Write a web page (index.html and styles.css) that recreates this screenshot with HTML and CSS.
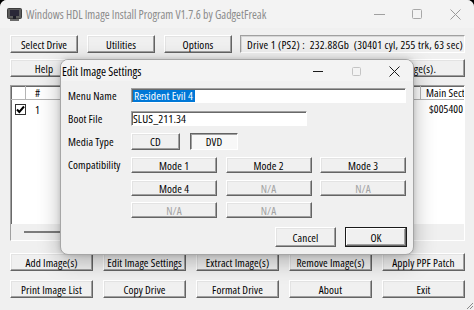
FILE: index.html
```html
<!DOCTYPE html>
<html>
<head>
<meta charset="utf-8">
<title>Windows HDL Image Install Program</title>
<link rel="stylesheet" href="styles.css">
</head>
<body>
<div class="window">
  <div class="titlebar">
    <svg class="app-icon" width="15" height="13" viewBox="0 0 15 13">
      <rect x="0.5" y="0.5" width="14" height="10" rx="1" fill="#5c5c5c" stroke="#3c3c3c"/>
      <rect x="3" y="2" width="9" height="6" fill="#2a2838"/>
      <rect x="6" y="8" width="3" height="3" fill="#1e1e28"/>
      <rect x="3" y="11" width="9" height="2" fill="#6a6a6a"/>
    </svg>
    <span class="title">Windows HDL Image Install Program V1.7.6 by GadgetFreak</span>
    <div class="caps">
      <span class="cap"><svg width="11" height="11" viewBox="0 0 11 11"><path d="M0 5.5H11" stroke="#a0a0a0" stroke-width="1"/></svg></span>
      <span class="cap"><svg width="10" height="10" viewBox="0 0 10 10"><rect x="0.5" y="0.5" width="9" height="9" rx="1" fill="none" stroke="#a8a8a8"/></svg></span>
      <span class="cap"><svg width="11" height="11" viewBox="0 0 11 11"><path d="M0.5 0.5L10.5 10.5M10.5 0.5L0.5 10.5" stroke="#9a9a9a" stroke-width="1"/></svg></span>
    </div>
  </div>

  <div class="main">
    <div class="row row1">
      <button class="btn b68">Select Drive</button>
      <button class="btn b68">Utilities</button>
      <button class="btn b68">Options</button>
      <div class="drivebox">Drive 1 (PS2) :&nbsp; 232.88Gb &nbsp;(30401 cyl, 255 trk, 63 sec)</div>
    </div>
    <div class="row row2">
      <button class="btn b68">Help</button>
      <button class="btn wide">Show Installed Image(s).</button>
    </div>

    <div class="list">
      <div class="lv-head">
        <div class="col c-check"></div>
        <div class="col c-num">#</div>
        <div class="col c-name"></div>
        <div class="col c-main">Main Sector</div>
      </div>
      <div class="lv-row">
        <div class="cell c-check">
          <svg width="11" height="11" viewBox="0 0 11 11"><rect x="0.5" y="0.5" width="10" height="10" fill="#fff" stroke="#333"/><path d="M2 5.5L4.3 8L9 2.5" fill="none" stroke="#000" stroke-width="2"/></svg>
        </div>
        <div class="cell c-num">1</div>
        <div class="cell c-name"></div>
        <div class="cell c-main num">$005400</div>
      </div>
      <div class="lv-fill"></div>
      <div class="hscroll"><div class="thumb"></div></div>
    </div>

    <div class="row row3">
      <button class="btn b83">Add Image(s)</button>
      <button class="btn b83">Edit Image Settings</button>
      <button class="btn b83">Extract Image(s)</button>
      <button class="btn b83">Remove Image(s)</button>
      <button class="btn b83">Apply PPF Patch</button>
    </div>
    <div class="row row4">
      <button class="btn b83">Print Image List</button>
      <button class="btn b83">Copy Drive</button>
      <button class="btn b83">Format Drive</button>
      <button class="btn b83">About</button>
      <button class="btn b83">Exit</button>
    </div>
  </div>

  <svg class="grip" width="10" height="10" viewBox="0 0 10 10">
    <path d="M9 3L3 9M9 6L6 9" stroke="#8a8a8a" stroke-width="1"/>
  </svg>

  <div class="dialog">
    <div class="dlg-title">
      <span class="dlg-text">Edit Image Settings</span>
      <div class="caps">
        <span class="cap"><svg width="10" height="10" viewBox="0 0 10 10"><path d="M0 5.5H10" stroke="#1a1a1a" stroke-width="1"/></svg></span>
        <span class="cap"><svg width="9" height="9" viewBox="0 0 9 9"><rect x="0.5" y="0.5" width="8" height="8" rx="1" fill="none" stroke="#c4c4c4"/></svg></span>
        <span class="cap"><svg width="11" height="11" viewBox="0 0 11 11"><path d="M0.5 0.5L10.5 10.5M10.5 0.5L0.5 10.5" stroke="#1a1a1a" stroke-width="1"/></svg></span>
      </div>
    </div>
    <div class="dlg-body">
      <div class="field f1">
        <span class="label">Menu Name</span>
        <div class="input in-name"><span class="sel">Resident Evil 4</span></div>
      </div>
      <div class="field f2">
        <span class="label">Boot File</span>
        <div class="input in-boot">SLUS_211.34</div>
      </div>
      <div class="field f3">
        <span class="label">Media Type</span>
        <button class="btn media">CD</button>
        <button class="btn media pressed">DVD</button>
      </div>
      <div class="field f4">
        <span class="label top">Compatibility</span>
        <div class="modes">
          <button class="btn">Mode 1</button>
          <button class="btn">Mode 2</button>
          <button class="btn">Mode 3</button>
          <button class="btn">Mode 4</button>
          <button class="btn disabled">N/A</button>
          <button class="btn disabled">N/A</button>
          <button class="btn disabled">N/A</button>
          <button class="btn disabled">N/A</button>
        </div>
      </div>
      <div class="actions">
        <button class="btn act">Cancel</button>
        <button class="btn act default">OK</button>
      </div>
    </div>
  </div>
</div>
</body>
</html>
```

FILE: styles.css
```css
* {
  box-sizing: border-box;
}

html, body {
  margin: 0;
  padding: 0;
  background: #000;
}

body {
  width: 474px;
  height: 310px;
  overflow: hidden;
  font-family: "Open Sans", "Liberation Sans", sans-serif;
  font-stretch: 75%;
  font-size: 11.2px;
  font-weight: 380;
  letter-spacing: 0.1px;
  color: #000;
}

.window {
  position: relative;
  width: 474px;
  height: 310px;
  background: #f0f0f0;
  border-radius: 7px 7px 0 0;
  overflow: hidden;
}

/* ---------- title bar ---------- */
.titlebar {
  height: 28px;
  display: flex;
  align-items: center;
  padding-left: 7px;
  background: #f3f3f3;
}

.app-icon {
  margin-right: 4px;
  margin-top: 1px;
}

.title {
  flex: 1;
  font-size: 11.8px;
  letter-spacing: 0;
  color: #8c8c8c;
  white-space: nowrap;
}

.caps {
  display: flex;
  align-self: stretch;
}

.cap {
  width: 38px;
  display: flex;
  align-items: center;
  justify-content: center;
}

/* ---------- main area ---------- */
.main {
  display: flex;
  flex-direction: column;
  padding: 7px 9px 0 10px;
}

.row {
  display: flex;
  height: 18px;
}

.row1 { gap: 9px; }
.row2 { margin-top: 6px; justify-content: space-between; }
.row3 { margin-top: 12px; gap: 10px; }
.row4 { margin-top: 9px; gap: 10px; }

.btn {
  font: inherit;
  letter-spacing: inherit;
  color: #000;
  padding: 0;
  margin: 0;
  background: #f0f0f0;
  border: 1px solid;
  border-color: #ffffff #646464 #646464 #ffffff;
  box-shadow: inset -1px -1px 0 #a0a0a0, inset 1px 1px 0 #e3e3e3;
  white-space: nowrap;
  overflow: hidden;
  text-align: center;
}

.b68 { width: 68px; }
.b83 { width: 83px; }

.wide {
  width: 225px;
  text-align: right;
  padding-right: 28px;
}

.drivebox {
  margin-left: -1px;
  width: 225px;
  display: flex;
  align-items: center;
  padding-left: 6px;
  letter-spacing: 0.25px;
  border: 1px solid;
  border-color: #a0a0a0 #ffffff #ffffff #a0a0a0;
  box-shadow: inset 1px 1px 0 #d6d6d6;
  white-space: nowrap;
}

/* ---------- list view ---------- */
.list {
  margin-top: 8px;
  height: 156px;
  background: #fff;
  border: 1px solid;
  border-color: #a0a0a0 #ffffff #ffffff #a0a0a0;
  box-shadow: inset 1px 1px 0 #696969;
  display: flex;
  flex-direction: column;
  overflow: hidden;
}

.lv-head {
  height: 14px;
  display: flex;
  border-bottom: 1px solid #b4b4b4;
  flex: none;
}

.lv-head .col {
  border-right: 1px solid #b4b4b4;
  line-height: 14px;
  white-space: nowrap;
  overflow: hidden;
}

.c-check { width: 15px; flex: none; }
.c-num { width: 40px; flex: none; padding-left: 9px; }
.c-name { width: 355px; flex: none; padding-left: 6px; }
.c-main { flex: 1; min-width: 0; padding-left: 5px; }
.lv-head .c-main { border-right: none; }

.lv-row {
  height: 16px;
  display: flex;
  align-items: center;
  flex: none;
}

.lv-row .cell {
  white-space: nowrap;
  overflow: hidden;
}

.lv-row .c-check {
  display: flex;
  justify-content: flex-end;
  padding-top: 3px;
}

.lv-row .c-num { padding-top: 2px; }

.lv-row .num {
  text-align: right;
  padding-right: 1px;
  padding-left: 0;
  padding-top: 1px;
}

.lv-fill { flex: 1; }

.hscroll {
  height: 16px;
  flex: none;
  background: #f0f0f0;
  padding: 7px 0 0 13px;
}

.thumb {
  width: 180px;
  height: 2px;
  background: #7c7c7c;
}

.grip {
  position: absolute;
  right: 0;
  bottom: 0;
}

/* ---------- dialog ---------- */
.dialog {
  position: absolute;
  left: 60px;
  top: 59px;
  width: 354px;
  height: 196px;
  background: #f0f0f0;
  border: 1px solid #a6a6a6;
  border-radius: 8px;
  box-shadow: 0 6px 22px rgba(0, 0, 0, 0.28), 0 0 5px rgba(0, 0, 0, 0.14);
  display: flex;
  flex-direction: column;
  overflow: hidden;
}

.dlg-title {
  height: 21px;
  display: flex;
  align-items: center;
  padding-left: 1px;
  background: #f3f3f3;
}

.dlg-text {
  flex: 1;
  font-size: 12.2px;
  letter-spacing: 0;
  padding-top: 1px;
}

.dlg-title .cap {
  padding-top: 1px;
}

.dlg-body {
  padding: 7px 6px 0 7px;
  display: flex;
  flex-direction: column;
}

.field {
  display: flex;
  align-items: center;
}

.label {
  width: 63px;
  flex: none;
}

.label.top {
  align-self: flex-start;
  padding-top: 1px;
  line-height: 14px;
}

.f1 { height: 15px; }
.f2 { height: 15px; margin-top: 8px; }
.f3 { height: 17px; margin-top: 7px; }
.f4 { margin-top: 7px; align-items: flex-start; }

.input {
  height: 15px;
  background: #fff;
  border: 1px solid;
  border-color: #a0a0a0 #ffffff #ffffff #a0a0a0;
  box-shadow: inset 1px 1px 0 #696969;
  padding: 0 0 0 1px;
  display: flex;
  align-items: center;
  white-space: nowrap;
  font-size: 11.6px;
}

.in-name { width: 275px; }
.in-boot { width: 176px; }

.sel {
  background: #0078d7;
  color: #fff;
  line-height: 12px;
  padding: 0 2px 0 1px;
}

.media {
  width: 49px;
  height: 17px;
}

.media + .media {
  margin-left: 10px;
  width: 48px;
}

.btn.pressed {
  background: #f8f8f8;
  border-color: #646464 #ffffff #ffffff #646464;
  box-shadow: inset 1px 1px 0 #a0a0a0;
}

.modes {
  display: grid;
  grid-template-columns: repeat(3, 86px);
  grid-auto-rows: 16px;
  column-gap: 8.5px;
  row-gap: 6.5px;
}

.btn.disabled {
  color: #a3a3a3;
}

.actions {
  margin-top: 9px;
  display: flex;
  justify-content: flex-end;
  gap: 9px;
}

.act {
  width: 61px;
  height: 20px;
}

.act.default {
  width: 62px;
  border: 1px solid #1a1a1a;
  box-shadow: inset -1px -1px 0 #696969, inset 1px 1px 0 #ffffff, inset -2px -2px 0 #a0a0a0;
}
```
